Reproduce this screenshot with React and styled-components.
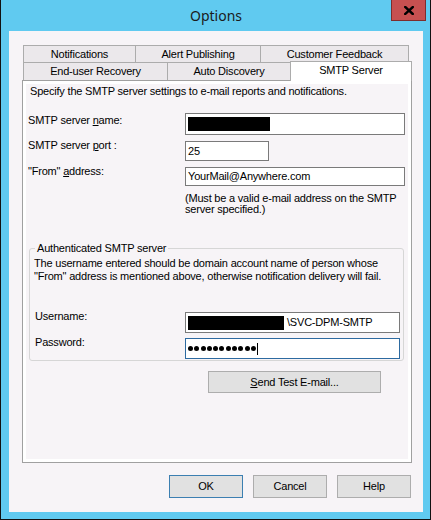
import React from "react";
import styled, { createGlobalStyle } from "styled-components";

const GlobalStyle = createGlobalStyle`
  html, body {
    margin: 0;
    padding: 0;
    background: #ffffff;
  }
`;

const Window = styled.div`
  position: relative;
  box-sizing: border-box;
  width: 431px;
  height: 520px;
  display: flex;
  flex-direction: column;
  padding: 0 7px 7px 8px;
  background: #60caf0;
  border: 1px solid #111111;
  border-top: none;
  font-family: "Liberation Sans", Arial, sans-serif;
  font-size: 11px;
  letter-spacing: -0.2px;
  color: #000000;
`;

const TitleBar = styled.div`
  flex: none;
  box-sizing: border-box;
  height: 31px;
  display: flex;
  align-items: center;
  justify-content: center;
  padding-bottom: 1px;
  font-family: "Segoe UI", "Noto Sans", sans-serif;
  font-size: 14px;
  letter-spacing: 0;
  color: #1b1b1b;
`;

const CloseButton = styled.div`
  position: absolute;
  top: 0;
  right: 4px;
  box-sizing: border-box;
  width: 35px;
  height: 21px;
  display: flex;
  align-items: center;
  justify-content: center;
  background: #c75050;
  border: 1px solid #7e2d2d;
  border-top: none;
`;

const Client = styled.div`
  flex: 1;
  display: flex;
  flex-direction: column;
  padding: 14px 11px 14px 13px;
  background: #f7f4f7;
`;

const TabRow = styled.div`
  display: flex;
  align-items: flex-start;
  height: ${({ $h }) => $h}px;
  padding-left: 1px;
`;

const Tab = styled.div`
  position: relative;
  z-index: ${({ $active }) => ($active ? 2 : 0)};
  box-sizing: border-box;
  width: ${({ $w }) => $w}px;
  height: ${({ $h }) => $h}px;
  margin-top: ${({ $active }) => ($active ? -1 : 0)}px;
  padding-top: 2px;
  border: 1px solid #acacac;
  border-bottom: none;
  background: ${({ $active }) => ($active ? "#ffffff" : "#ebe8eb")};
  text-align: center;
  line-height: 13px;
  white-space: nowrap;

  & + & {
    margin-left: -1px;
  }
`;

const Panel = styled.div`
  box-sizing: border-box;
  height: 383px;
  padding-top: 3px;
  border: 1px solid #a0a0a0;
  box-shadow: inset 0 0 0 3px #ffffff;
  background: #f7f4f7;
`;

const Intro = styled.div`
  padding-left: 7px;
  line-height: 14px;
  white-space: nowrap;
`;

const FormRow = styled.div`
  display: grid;
  grid-template-columns: ${({ $label }) => $label}px auto;
  align-items: start;
  margin-top: ${({ $gap }) => $gap}px;
  padding-left: ${({ $indent }) => $indent}px;
`;

const Label = styled.div`
  margin-top: ${({ $shift }) => $shift || 0}px;
  line-height: 13px;
  white-space: nowrap;
`;

const Key = styled.span`
  text-decoration: underline;
  text-underline-offset: 1px;
`;

const Field = styled.div`
  box-sizing: border-box;
  width: ${({ $w }) => $w}px;
  height: ${({ $h }) => $h}px;
  display: flex;
  align-items: center;
  padding: 0 2px;
  border: 1px solid ${({ $focused }) => ($focused ? "#2d6aa0" : "#7a7a7a")};
  background: #ffffff;
  line-height: 13px;
  white-space: nowrap;
`;

const Redacted = styled.span`
  display: block;
  flex: none;
  width: ${({ $w }) => $w}px;
  height: 14px;
  margin-right: ${({ $after }) => $after || 0}px;
  background: #000000;
`;

const Dots = styled.div`
  display: flex;
  align-items: center;
  gap: 1.3px;
`;

const Dot = styled.span`
  width: 5px;
  height: 5px;
  border-radius: 50%;
  background: #000000;
`;

const Caret = styled.span`
  width: 1px;
  height: 12px;
  margin-left: 1px;
  background: #000000;
`;

const Hint = styled.div`
  margin-top: 7px;
  padding-left: 162px;
  line-height: 11px;
`;

const Group = styled.fieldset`
  box-sizing: border-box;
  width: 375px;
  margin: 27px 0 0 6px;
  padding: 2px 4px 1px 4px;
  border: 1px solid #d6d6d6;
  border-radius: 3px;
  min-inline-size: 0;
`;

const Legend = styled.legend`
  margin-left: 1px;
  padding: 0 2px;
  line-height: 13px;
  font-size: 11px;
`;

const GroupText = styled.div`
  line-height: 13px;
  white-space: nowrap;
`;

const Button = styled.button`
  box-sizing: border-box;
  width: ${({ $w }) => $w}px;
  height: ${({ $h }) => $h}px;
  margin: 0;
  padding: 0;
  display: flex;
  align-items: center;
  justify-content: center;
  border: 1px solid ${({ $default }) => ($default ? "#3c7fb1" : "#adadad")};
  border-radius: 0;
  background: #e1e1e1;
  font-family: "Liberation Sans", Arial, sans-serif;
  font-size: 11px;
  letter-spacing: -0.2px;
  line-height: 13px;
  color: #000000;
`;

const TestButtonRow = styled.div`
  margin-top: 10px;
  padding-left: 185px;
`;

const Footer = styled.div`
  display: flex;
  justify-content: flex-end;
  gap: 10px;
  margin-top: 12px;
  padding-right: 1px;
`;

const App = () => {
  return (
    <>
      <GlobalStyle />
      <Window>
        <TitleBar>Options</TitleBar>
        <CloseButton>
          <svg width="10" height="9" viewBox="0 0 10 9">
            <path
              d="M1.2 1 L8.8 8 M8.8 1 L1.2 8"
              stroke="#000"
              strokeWidth="2.4"
              strokeLinecap="square"
            />
          </svg>
        </CloseButton>

        <Client>
          <TabRow $h={17}>
            <Tab $w={113} $h={17}>Notifications</Tab>
            <Tab $w={126} $h={17}>Alert Publishing</Tab>
            <Tab $w={149} $h={17}>Customer Feedback</Tab>
          </TabRow>
          <TabRow $h={18}>
            <Tab $w={145} $h={18}>End-user Recovery</Tab>
            <Tab $w={124} $h={18}>Auto Discovery</Tab>
            <Tab $w={122} $h={20} $active>SMTP Server</Tab>
          </TabRow>

          <Panel>
            <Intro>Specify the SMTP server settings to e-mail reports and notifications.</Intro>

            <FormRow $label={157} $gap={15} $indent={5}>
              <Label $shift={1}>
                SMTP server <Key>n</Key>ame:
              </Label>
              <Field $w={220} $h={22}>
                <Redacted $w={82} />
              </Field>
            </FormRow>
            <FormRow $label={157} $gap={6} $indent={5}>
              <Label $shift={-2}>
                SMTP server <Key>p</Key>ort :
              </Label>
              <Field $w={84} $h={20}>25</Field>
            </FormRow>
            <FormRow $label={157} $gap={6} $indent={5}>
              <Label $shift={-2}>
                "From" <Key>a</Key>ddress:
              </Label>
              <Field $w={220} $h={19}>YourMail@Anywhere.com</Field>
            </FormRow>
            <Hint>
              (Must be a valid e-mail address on the SMTP
              <br />
              server specified.)
            </Hint>

            <Group>
              <Legend>Authenticated SMTP server</Legend>
              <GroupText>
                The username entered should be domain account name of person whose
                <br />
                "From" address is mentioned above, otherwise notification delivery will fail.
              </GroupText>
              <FormRow $label={150} $gap={29} $indent={1}>
                <Label $shift={-2}>Username:</Label>
                <Field $w={215} $h={21}>
                  <Redacted $w={96} $after={3} />
                  \SVC-DPM-SMTP
                </Field>
              </FormRow>
              <FormRow $label={150} $gap={5} $indent={1}>
                <Label $shift={-2}>Password:</Label>
                <Field $w={215} $h={21} $focused>
                  <Dots>
                    {Array.from({ length: 11 }).map((_, i) => (
                      <Dot key={i} />
                    ))}
                  </Dots>
                  <Caret />
                </Field>
              </FormRow>
            </Group>

            <TestButtonRow>
              <Button $w={173} $h={22}>
                <Key>S</Key>end Test E-mail...
              </Button>
            </TestButtonRow>
          </Panel>

          <Footer>
            <Button $w={74} $h={23} $default>OK</Button>
            <Button $w={74} $h={23}>Cancel</Button>
            <Button $w={74} $h={23}>Help</Button>
          </Footer>
        </Client>
      </Window>
    </>
  );
};

export default App;
